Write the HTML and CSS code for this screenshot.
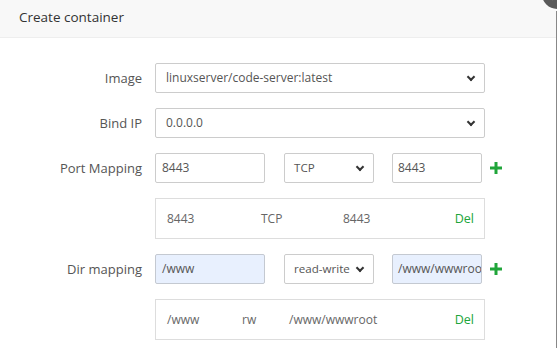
FILE: index.html
```html
<!DOCTYPE html>
<html lang="en">
<head>
  <meta charset="UTF-8" />
  <title>Create container</title>
  <link rel="stylesheet" href="styles.css">
</head>
<body>
<div class="layer">
  <div class="layer-title">Create container</div>
  <span class="layer-close"></span>
  <span class="layer-edge"></span>

  <div class="form">
    <div class="row">
      <label>Image</label>
      <div class="select wide">linuxserver/code-server:latest</div>
    </div>

    <div class="row">
      <label>Bind IP</label>
      <div class="select wide">0.0.0.0</div>
    </div>

    <div class="row">
      <label>Port Mapping</label>
      <div class="input first">8443</div>
      <div class="select small">TCP</div>
      <div class="input small">8443</div>
      <span class="plus"><svg width="12" height="12" viewBox="0 0 12 12"><path d="M6 0v12M0 6h12" stroke="#20a53a" stroke-width="3"/></svg></span>
    </div>

    <div class="row">
      <label></label>
      <div class="list port">
        <span class="c1">8443</span>
        <span class="c2">TCP</span>
        <span class="c3">8443</span>
        <a class="del">Del</a>
      </div>
    </div>

    <div class="row">
      <label>Dir mapping</label>
      <div class="input first filled">/www</div>
      <div class="select small">read-write</div>
      <div class="input small filled">/www/wwwroot</div>
      <span class="plus"><svg width="12" height="12" viewBox="0 0 12 12"><path d="M6 0v12M0 6h12" stroke="#20a53a" stroke-width="3"/></svg></span>
    </div>

    <div class="row">
      <label></label>
      <div class="list dir">
        <span class="c1">/www</span>
        <span class="c2">rw</span>
        <span class="c3">/www/wwwroot</span>
        <a class="del">Del</a>
      </div>
    </div>
  </div>
</div>
</body>
</html>
```

FILE: styles.css
```css
body {
  margin: 0;
  font-family: 'Open Sans', sans-serif;
  font-size: 12.5px;
  color: #555;
  background-color: #fff;
}

.layer {
  position: relative;
  height: 348px;
  overflow: hidden;
}

.layer-title {
  height: 37px;
  line-height: 35px;
  padding-left: 19px;
  font-size: 13.5px;
  color: #333;
  background-color: #f8f8f8;
  border-bottom: 1px solid #eee;
}

.layer-close {
  position: absolute;
  left: 542px;
  top: -21px;
  width: 30px;
  height: 30px;
  border-radius: 50%;
  background-color: #5a5a5a;
}

.layer-close::before,
.layer-close::after {
  content: "";
  position: absolute;
  left: 7px;
  top: 13px;
  width: 16px;
  height: 3px;
  background-color: #fff;
  transform: rotate(45deg);
}

.layer-close::after {
  transform: rotate(-45deg);
}

.layer-edge {
  position: absolute;
  left: 556px;
  top: 11px;
  bottom: 0;
  width: 1px;
  background-color: #888;
}

.form {
  padding-top: 25px;
}

.row {
  display: flex;
  align-items: center;
  margin-bottom: 15px;
}

.row label {
  width: 142px;
  padding-right: 13px;
  text-align: right;
  font-size: 13px;
  color: #555;
}

.input,
.select {
  box-sizing: border-box;
  height: 30px;
  line-height: 28px;
  padding: 0 10px;
  border: 1px solid #ccc;
  border-radius: 2px;
  font-size: 12px;
  color: #555;
  white-space: nowrap;
  overflow: hidden;
}

.select {
  position: relative;
  padding-right: 20px;
}

.select::after {
  content: "";
  position: absolute;
  right: 10px;
  top: 10px;
  width: 4px;
  height: 4px;
  border-right: 2px solid #333;
  border-bottom: 2px solid #333;
  transform: rotate(45deg);
}

.select.wide {
  width: 330px;
}

.input.first {
  width: 110px;
  padding-left: 6px;
}

.select.small {
  width: 90px;
  margin-left: 19px;
  padding-left: 9px;
  font-size: 11.6px;
}

.input.small {
  width: 90px;
  margin-left: 18px;
  padding-left: 5px;
  padding-right: 0;
}

.input.filled {
  background-color: #e8f0fe;
  border-color: #c4c9d1;
}

.plus {
  display: flex;
  margin-left: 8px;
}

.list {
  box-sizing: border-box;
  display: flex;
  align-items: center;
  width: 330px;
  height: 41px;
  padding: 0 10px 0 11px;
  border: 1px solid #ddd;
  font-size: 12px;
  color: #666;
}

.list .c3 {
  flex: 1;
}

.port .c1 {
  width: 94px;
}

.port .c2 {
  width: 82px;
}

.dir .c1 {
  width: 75px;
}

.dir .c2 {
  width: 47px;
}

.del {
  font-size: 12.5px;
  color: #20a53a;
  text-decoration: none;
}
```
